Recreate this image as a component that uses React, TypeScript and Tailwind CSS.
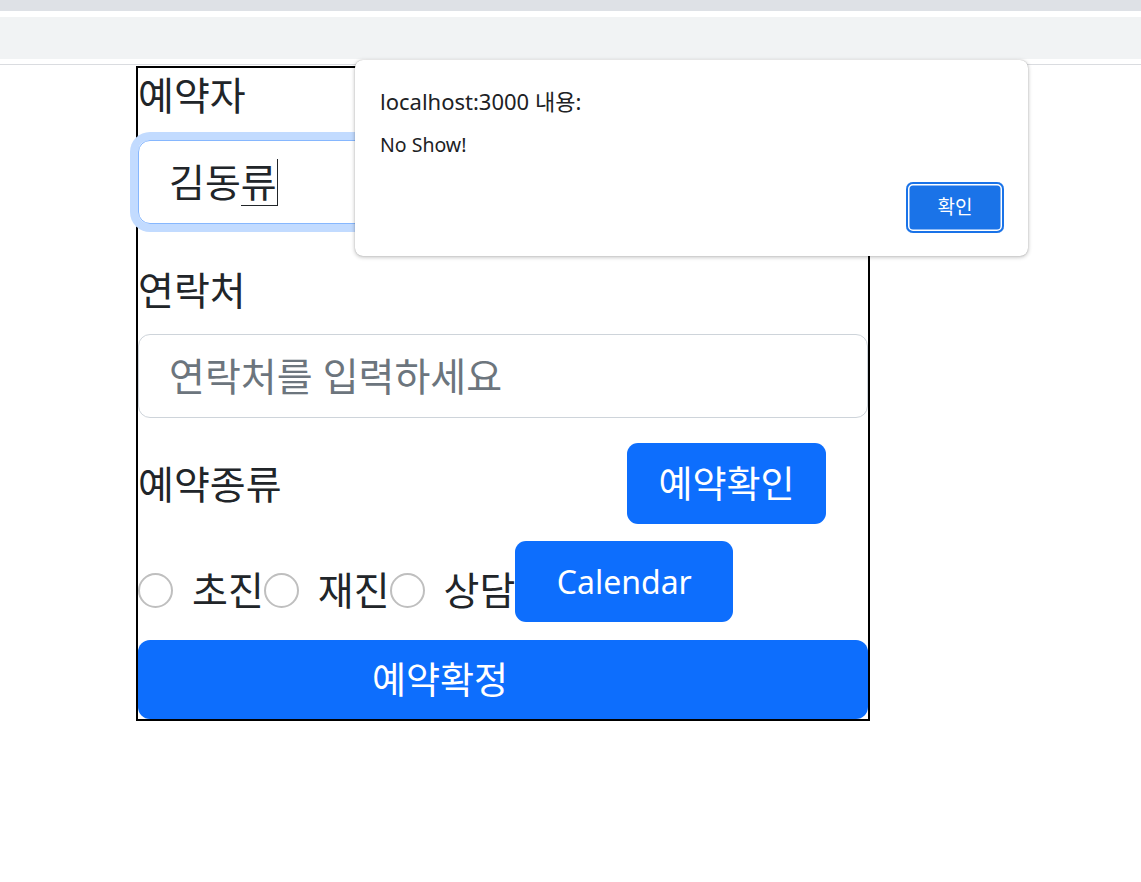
const font = "font-['Noto_Sans','Noto_Sans_CJK_KR',sans-serif]";

function Radio({ label }: { label: string }) {
  return (
    <div className="mt-[17px] flex items-center">
      <span className="h-[35px] w-[35px] shrink-0 rounded-full border-2 border-[#bfbfbf] bg-white" />
      <span className="ml-[19px] text-[39px] leading-[54px] text-[#212529]">{label}</span>
    </div>
  );
}

function AlertDialog() {
  return (
    <div className="absolute left-[355px] top-[60px] h-[196px] w-[673px] rounded-[8px] bg-white shadow-[0_1px_4px_rgba(0,0,0,0.28),0_0_1px_rgba(0,0,0,0.3)]">
      <div className="pl-[25px] pt-[25px] text-[22px] leading-[32px] text-[#202124]">
        localhost:3000 내용:
      </div>
      <div className="pl-[25px] pt-[15px] text-[19.5px] leading-[26px] text-[#202124]">No Show!</div>
      <button
        type="button"
        className="absolute bottom-[23px] right-[24px] h-[51px] w-[98px] rounded-[7px] bg-[#1a73e8] text-[19px] text-white shadow-[inset_0_0_0_2px_#1a73e8,inset_0_0_0_3.5px_#ffffff]"
      >
        확인
      </button>
    </div>
  );
}

export default function App() {
  return (
    <div className={`relative h-[882px] w-[1141px] overflow-hidden bg-white ${font}`}>
      {/* browser chrome */}
      <div className="h-[11px] bg-[#dee1e6]" />
      <div className="h-[6px] bg-white" />
      <div className="h-[42px] bg-[#f1f3f4]" />
      <div className="h-[5px] bg-white" />
      <div className="h-px bg-[#dadce0]" />

      <div className="ml-[136px] mt-px w-[734px] border-2 border-black">
        <div className="text-[39px] leading-[54px] text-[#212529]">예약자</div>
        <div className="mt-[18px] flex h-[84px] items-center rounded-[12px] border-[1.5px] border-[#86b7fe] pl-[30px] text-[39px] text-[#212529] shadow-[0_0_0_8px_#c2dbff]">
          <span>김동</span>
          <span className="border-b-[1.5px] border-r-[1.5px] border-[#212529] leading-[46px]">류</span>
        </div>

        <div className="mt-[39px] text-[39px] leading-[54px] text-[#212529]">연락처</div>
        <div className="mt-[17px] flex h-[84px] items-center rounded-[12px] border-[1.5px] border-[#ced4da] pl-[30px] text-[39px] text-[#6c757d]">
          연락처를 입력하세요
        </div>

        <div className="mt-[25px] flex h-[81px] items-center">
          <span className="text-[39px] leading-[54px] text-[#212529]">예약종류</span>
          <button
            type="button"
            className="ml-auto mr-[42px] h-[81px] w-[199px] rounded-[11px] bg-[#0d6efd] text-[37px] text-white"
          >
            예약확인
          </button>
        </div>

        <div className="mt-[17px] flex h-[81px] items-center">
          <Radio label="초진" />
          <Radio label="재진" />
          <Radio label="상담" />
          <button
            type="button"
            className="h-[81px] w-[218px] rounded-[11px] bg-[#0d6efd] text-[32px] text-white"
          >
            Calendar
          </button>
        </div>

        <button
          type="button"
          className="mt-[18px] block h-[79px] w-full rounded-[12px] bg-[#0d6efd] pl-[234px] text-left text-[37px] text-white"
        >
          예약확정
        </button>
      </div>

      <AlertDialog />
    </div>
  );
}
